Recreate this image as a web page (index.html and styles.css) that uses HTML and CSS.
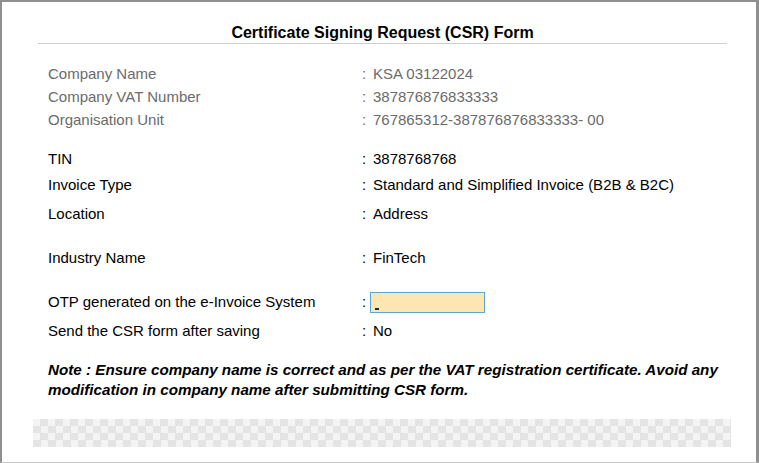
FILE: index.html
```html
<!DOCTYPE html>
<html>
<head>
<meta charset="utf-8">
<link rel="stylesheet" href="styles.css">
</head>
<body>
<div class="frame">
  <div class="header">Certificate Signing Request (CSR) Form</div>
  <div class="rows">
    <div class="row tight muted"><span class="label">Company Name</span><span class="colon">:</span><span class="value">KSA 03122024</span></div>
    <div class="row tight muted"><span class="label">Company VAT Number</span><span class="colon">:</span><span class="value">387876876833333</span></div>
    <div class="row tight muted"><span class="label">Organisation Unit</span><span class="colon">:</span><span class="value">767865312-387876876833333- 00</span></div>
    <div class="row gap-a"><span class="label">TIN</span><span class="colon">:</span><span class="value">3878768768</span></div>
    <div class="row gap-b"><span class="label">Invoice Type</span><span class="colon">:</span><span class="value">Standard and Simplified Invoice (B2B &amp; B2C)</span></div>
    <div class="row gap-c"><span class="label">Location</span><span class="colon">:</span><span class="value">Address</span></div>
    <div class="row gap-d"><span class="label">Industry Name</span><span class="colon">:</span><span class="value">FinTech</span></div>
    <div class="row gap-d"><span class="label">OTP generated on the e-Invoice System</span><span class="colon">:</span><span class="value"><span class="input"><span class="cursor"></span></span></span></div>
    <div class="row gap-c"><span class="label">Send the CSR form after saving</span><span class="colon">:</span><span class="value">No</span></div>
  </div>
  <p class="note">Note : Ensure company name is correct and as per the VAT registration certificate. Avoid any modification in company name after submitting CSR form.</p>
  <div class="checker"></div>
</div>
</body>
</html>
```

FILE: styles.css
```css
html, body {
  margin: 0;
  padding: 0;
  background: #ffffff;
}
body {
  font-family: "Liberation Sans", Arial, sans-serif;
  color: #000;
}
.frame {
  box-sizing: border-box;
  width: 759px;
  height: 463px;
  border-left: 2px solid #8f8f8f;
  border-top: 2px solid #8f8f8f;
  border-right: 3px solid #8f8f8f;
  border-bottom: 1px solid #c8c8c8;
  overflow: hidden;
}
.header {
  margin: 0 29px 0 36px;
  padding-top: 22px;
  height: 18px;
  line-height: 18px;
  padding-bottom: 1px;
  border-bottom: 1px solid #cfcfcf;
  text-align: center;
  font-weight: bold;
  font-size: 16px;
}
.rows {
  margin-top: 18px;
  padding-left: 46px;
}
.row {
  display: flex;
  height: 24px;
  line-height: 24px;
  font-size: 15px;
  align-items: center;
}
.row.tight {
  height: 23px;
  line-height: 23px;
}
.muted { color: #6b6b6b; }
.gap-a { margin-top: 16px; }
.gap-b { margin-top: 2px; }
.gap-c { margin-top: 5px; }
.gap-d { margin-top: 20px; }
.label {
  width: 314px;
  flex: none;
}
.colon {
  width: 11px;
  flex: none;
}
.value {
  display: flex;
  align-items: center;
}
.input {
  box-sizing: border-box;
  width: 115px;
  height: 21px;
  margin-left: -3px;
  background: #fde6b2;
  border: 1px solid #5aa6d6;
  position: relative;
}
.cursor {
  position: absolute;
  left: 4px;
  bottom: 2px;
  width: 4px;
  height: 2px;
  background: #1a2a4a;
}
.note {
  margin: 17px 30px 0 46px;
  font-size: 15.2px;
  line-height: 20px;
  font-weight: bold;
  font-style: italic;
}
.checker {
  margin: 19px 25px 0 31px;
  height: 28px;
  background-color: #ffffff;
  background-image: conic-gradient(#dedede 25%, #f2f2f2 0 50%, #dedede 0 75%, #f2f2f2 0);
  background-size: 15px 14px;
  opacity: 0.8;
}
```
